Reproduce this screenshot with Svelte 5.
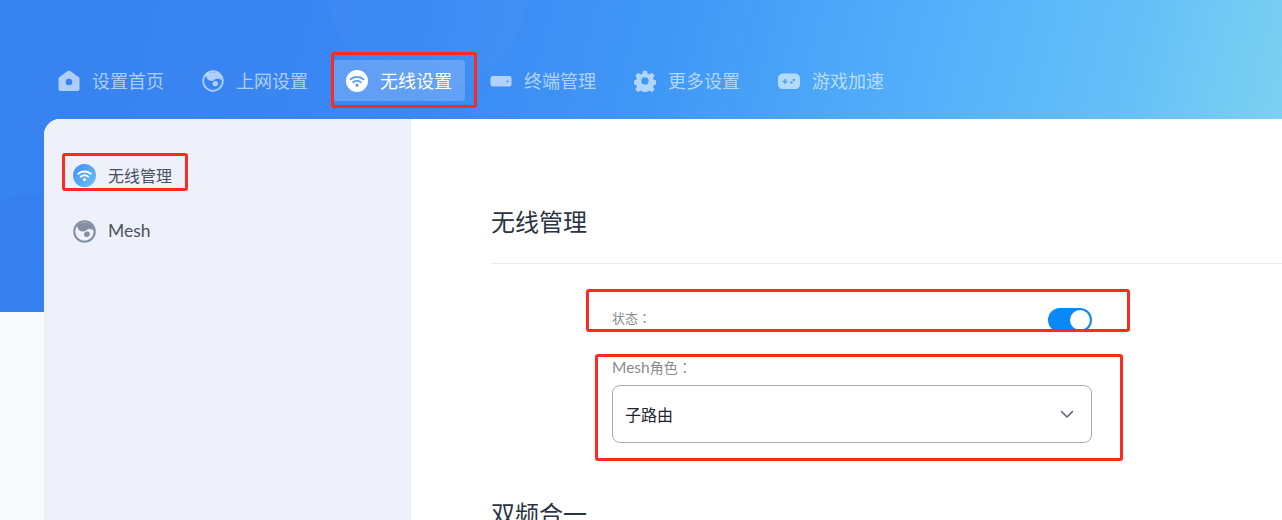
<script>
  const tabs = [
    { id: 'home', label: '设置首页' },
    { id: 'globe', label: '上网设置' },
    { id: 'wifi', label: '无线设置', active: true },
    { id: 'device', label: '终端管理' },
    { id: 'gear', label: '更多设置' },
    { id: 'game', label: '游戏加速' }
  ];
</script>

{#snippet icon(id)}
  {#if id === 'home'}
    <svg class="ico" viewBox="0 0 22 22"><path fill-rule="evenodd" fill="currentColor" d="M.5 7.800 9.600 1a2.300 2.300 0 0 1 2.800 0l9.100 6.800V19a2 2 0 0 1-2 2h-17a2 2 0 0 1-2-2ZM11 8.700a3.300 3.300 0 1 0 0 6.600 3.300 3.300 0 0 0 0-6.600Z"/></svg>
  {:else if id === 'globe'}
    <svg class="ico" viewBox="0 0 22 22"><circle cx="11" cy="11" r="9.800" fill="none" stroke="currentColor" stroke-width="1.800"/><path fill="currentColor" d="M4 4.500C7 2 14 1 18 5c1.300 1.400 1.800 3.800 1.800 5.500-1.300-1.800-4.300-2.300-6-1.500-1.300.6-2.300 2-3.800 2-2 0-4-.8-5-2.500-.5-1.200-1.500-2.800-1-4ZM12 11.500c1.500-1 3.500-.3 4 1 .6 1.500-.5 3.500-2.300 3.800-1.500.2-3-.8-3.200-2.300-.1-1 .6-2 1.500-2.500Z"/></svg>
  {:else if id === 'wifi'}
    <svg class="ico" viewBox="0 0 22 22"><circle cx="11" cy="11" r="11" fill="currentColor"/><g class="cut" fill="none" stroke-width="2" stroke-linecap="round"><path d="M4.600 9.300c3.700-3 9.100-3 12.800 0"/><path d="M7.200 12.200c2.300-1.700 5.300-1.700 7.600 0"/></g><circle class="cutfill" cx="11" cy="15.200" r="1.600"/></svg>
  {:else if id === 'device'}
    <svg class="ico" viewBox="0 0 24 22"><path fill-rule="evenodd" fill="currentColor" d="M3 5.500h18a2.500 2.500 0 0 1 2.500 2.500v6.500a2.500 2.500 0 0 1-2.500 2.500H3A2.500 2.500 0 0 1 .5 14.500V8A2.500 2.500 0 0 1 3 5.500ZM19 10.500a1 1 0 1 0 0 2 1 1 0 0 0 0-2Z"/></svg>
  {:else if id === 'gear'}
    <svg class="ico" viewBox="0 0 22 22"><path fill-rule="evenodd" fill="currentColor" d="M9 .5h4l.6 3 1.900.8 2.600-1.700 2.800 2.800-1.700 2.600.8 1.900 3 .6v4l-3 .6-.8 1.900 1.700 2.600-2.800 2.800-2.600-1.700-1.900.8-.6 3H9l-.6-3-1.900-.8-2.600 1.700-2.800-2.800 1.700-2.600-.8-1.900-3-.6v-4l3-.6.8-1.900-1.700-2.600 2.800-2.800 2.600 1.700 1.900-.8ZM11 7.300a3.700 3.700 0 1 0 0 7.400 3.700 3.700 0 0 0 0-7.400Z" transform="translate(.2 .2) scale(.98)"/></svg>
  {:else}
    <svg class="ico" viewBox="0 0 22 22"><path fill-rule="evenodd" fill="currentColor" d="M5 3.500h12a5 5 0 0 1 5 5v6a4.500 4.500 0 0 1-4.500 4.500h-13A4.500 4.500 0 0 1 0 14.500v-6a5 5 0 0 1 5-5ZM6.200 9v1.800H4.400v1.500h1.800V14h1.500v-1.700h1.800v-1.500H7.700V9ZM15.800 8.800a1.200 1.200 0 1 0 0 2.400 1.200 1.200 0 0 0 0-2.400ZM13.500 11.300a1.200 1.200 0 1 0 0 2.400 1.200 1.200 0 0 0 0-2.400Z"/></svg>
  {/if}
{/snippet}

<div class="page">
  <header class="hero">
    <span class="disc d1"></span>
    <span class="disc d2"></span>
    <nav class="tabs">
      {#each tabs as t}
        <div class="tab" class:active={t.active}>
          <span class="tab-icon">{@render icon(t.id)}</span>
          <span class="tab-text">{t.label}</span>
          {#if t.active}<span class="mark tab-mark"></span>{/if}
        </div>
      {/each}
    </nav>
  </header>

  <section class="panel">
    <aside class="side">
      <div class="side-item current">
        <svg class="side-ico" viewBox="0 0 24 24">
          <defs><linearGradient id="wg" x1="0" y1="0" x2="1" y2="1"><stop offset="0" stop-color="#3f8ef5"/><stop offset="1" stop-color="#6ec0fb"/></linearGradient></defs>
          <circle cx="12" cy="12" r="12" fill="url(#wg)"/>
          <g fill="none" stroke="#fff" stroke-width="2" stroke-linecap="round"><path d="M5.400 10.200c3.800-3.100 9.400-3.100 13.200 0"/><path d="M8 13.200c2.400-1.800 5.600-1.800 8 0"/></g>
          <circle cx="12" cy="16.300" r="1.600" fill="#fff"/>
        </svg>
        <span class="side-text">无线管理</span>
        <span class="mark side-mark"></span>
      </div>
      <div class="side-item">
        <svg class="side-ico" viewBox="0 0 22 22"><circle cx="11" cy="11" r="9.800" fill="none" stroke="#858fa2" stroke-width="2"/><path fill="#858fa2" d="M4 4.500C7 2 14 1 18 5c1.300 1.400 1.800 3.800 1.800 5.500-1.300-1.800-4.300-2.300-6-1.500-1.300.6-2.300 2-3.800 2-2 0-4-.8-5-2.500-.5-1.200-1.500-2.800-1-4ZM12 11.500c1.500-1 3.500-.3 4 1 .6 1.500-.5 3.500-2.300 3.800-1.500.2-3-.8-3.200-2.300-.1-1 .6-2 1.500-2.500Z"/></svg>
        <span class="side-text mesh">Mesh</span>
      </div>
    </aside>

    <main class="content">
      <h2 class="title">无线管理</h2>
      <div class="form">
        <div class="row-status">
          <span class="label small">状态<span class="colon">：</span></span>
          <span class="switch"><span class="knob"></span></span>
          <span class="mark status-mark"></span>
        </div>
        <div class="field">
          <span class="label"><span class="latin">Mesh</span>角色<span class="colon">：</span></span>
          <div class="select">
            <span>子路由</span>
            <svg class="chev" viewBox="0 0 14 9"><path d="M1.500 1.500 7 7l5.500-5.500" fill="none" stroke="#5d6478" stroke-width="1.600" stroke-linecap="round" stroke-linejoin="round"/></svg>
          </div>
          <span class="mark field-mark"></span>
        </div>
      </div>
      <h2 class="title second">双频合一</h2>
    </main>
  </section>
</div>

<style>
  :global(body) {
    margin: 0;
    background: #f8f9fd;
  }
  .page {
    position: relative;
    height: 520px;
    overflow: hidden;
    font-family: "Noto Sans CJK SC", "Noto Sans", sans-serif;
  }
  .hero {
    position: relative;
    height: 312px;
    margin-bottom: -193px;
    overflow: hidden;
    background: linear-gradient(104deg, #3682f0 0%, #3a88f3 32%, #4098f6 50%, #52aefa 68%, #64bff8 84%, #82d6ee 100%);
    box-sizing: border-box;
    padding: 60px 0 0 45px;
  }
  .disc {
    position: absolute;
    border-radius: 50%;
  }
  .d1 {
    left: 328px;
    top: -110px;
    width: 200px;
    height: 200px;
    background: rgba(255, 255, 255, 0.025);
  }
  .d2 {
    left: -260px;
    top: 190px;
    width: 700px;
    height: 700px;
    background: rgba(10, 60, 220, 0.05);
  }
  .tabs {
    position: relative;
    display: flex;
    gap: 12px;
  }
  .tab {
    position: relative;
    display: flex;
    align-items: center;
    gap: 12px;
    width: 132px;
    height: 41px;
    box-sizing: border-box;
    padding: 0 13px;
    border-radius: 4px;
    font-size: 18px;
    color: rgba(255, 255, 255, 0.6);
    white-space: nowrap;
  }
  .tab.active {
    background: rgba(255, 255, 255, 0.2);
    color: #fff;
  }
  .tab-text {
    margin-top: -2px;
  }
  .tab-icon {
    display: flex;
    flex: none;
    width: 22px;
    height: 22px;
  }
  .ico {
    width: 22px;
    height: 22px;
    display: block;
  }
  .cut {
    stroke: #5fa0f7;
  }
  .cutfill {
    fill: #5fa0f7;
  }
  .mark {
    position: absolute;
    box-sizing: border-box;
    border: 3px solid #ff2a1f;
    border-radius: 3px;
    pointer-events: none;
  }
  .tab-mark {
    left: -2px;
    top: -8px;
    width: 146px;
    height: 56px;
  }
  .panel {
    position: relative;
    display: flex;
    margin-left: 44px;
    height: 480px;
    background: #fff;
    border-top-left-radius: 16px;
    overflow: hidden;
  }
  .side {
    flex: none;
    width: 367px;
    box-sizing: border-box;
    padding: 28px 0 0 29px;
    background: #eef1f9;
  }
  .side-item {
    position: relative;
    display: flex;
    align-items: center;
    gap: 12px;
    height: 56px;
    font-size: 16px;
    color: #495165;
  }
  .side-text {
    margin-top: -1px;
  }
  .mesh {
    font-family: Lato, "Noto Sans", sans-serif;
    font-size: 17.500px;
    margin-top: -2px;
  }
  .side-ico {
    width: 23px;
    height: 23px;
    flex: none;
  }
  .side-mark {
    left: -11px;
    top: 6px;
    width: 126px;
    height: 38px;
  }
  .content {
    flex: 1;
    box-sizing: border-box;
    padding: 0 0 0 80px;
    min-width: 0;
  }
  .title {
    margin: 0;
    font-size: 24px;
    font-weight: 400;
    line-height: 32px;
    color: #2a3342;
    padding: 86px 0 26px;
    border-bottom: 1px solid #e8eaee;
    margin-right: -40px;
  }
  .form {
    width: 480px;
    margin-left: 121px;
  }
  .row-status {
    position: relative;
    display: flex;
    justify-content: space-between;
    padding-top: 44px;
    height: 24px;
  }
  .label {
    display: block;
    color: #8a8c90;
    font-size: 14px;
    line-height: 20px;
  }
  .small {
    font-size: 13px;
  }
  .colon {
    font-family: "Noto Sans CJK TC", sans-serif;
  }
  .latin {
    font-family: Lato, "Noto Sans", sans-serif;
    font-size: 15.500px;
  }
  .switch {
    position: relative;
    width: 44px;
    height: 24px;
    border-radius: 12px;
    background: #0a88f8;
  }
  .knob {
    position: absolute;
    right: 2px;
    top: 2px;
    width: 20px;
    height: 20px;
    border-radius: 50%;
    background: #fff;
  }
  .status-mark {
    left: -26px;
    top: 25px;
    width: 544px;
    height: 43px;
  }
  .field {
    position: relative;
    margin-top: 25px;
  }
  .select {
    display: flex;
    align-items: center;
    justify-content: space-between;
    height: 58px;
    margin-top: 8px;
    box-sizing: border-box;
    padding: 0 17px 0 12px;
    border: 1px solid #a9abb0;
    border-radius: 8px;
    font-size: 16px;
    color: #1e2430;
  }
  .chev {
    width: 14px;
    height: 9px;
  }
  .field-mark {
    left: -17px;
    top: -3px;
    width: 528px;
    height: 107px;
  }
  .second {
    padding: 0;
    margin-top: 54px;
    border: 0;
  }
</style>
